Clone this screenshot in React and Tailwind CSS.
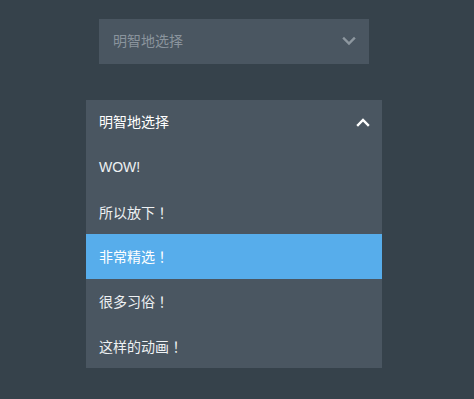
import React from "react";

const font = { fontFamily: '"Liberation Sans", "Noto Sans CJK SC", sans-serif' };
const jp = { fontFamily: '"Noto Sans CJK JP", "Noto Sans CJK TC", sans-serif' };

function Chevron({ up, className }) {
  return (
    <svg viewBox="0 0 16 16" className={className} fill="none" stroke="currentColor" strokeWidth="2.4" strokeLinecap="square" strokeLinejoin="miter">
      {up ? <path d="M3 11 L8 6 L13 11" /> : <path d="M3 5.5 L8 10.5 L13 5.5" />}
    </svg>
  );
}

function Label({ text }) {
  if (text.endsWith("！")) {
    return (
      <span>
        {text.slice(0, -1)}
        <span style={jp}>！</span>
      </span>
    );
  }
  return <span>{text}</span>;
}

export default function App() {
  const items = ["WOW!", "所以放下！", "非常精选！", "很多习俗！", "这样的动画！"];
  return (
    <div className="w-[474px] h-[399px] bg-[#36424b] flex flex-col items-start pl-[86px] pt-[19px] overflow-hidden" style={font}>
      <div className="w-[270px] h-[44.5px] bg-[#4a5661] flex items-center justify-between ml-[13px] pl-[14px] pr-[12px] text-[14px] text-[#8a949d]">
        <span>明智地选择</span>
        <Chevron className="w-[16px] h-[16px] text-[#8d979f]" />
      </div>
      <div className="w-[296px] mt-[36.5px] bg-[#4a5661] text-[14px] text-white flex flex-col">
        <div className="h-[44.67px] flex items-center justify-between pl-[13px] pr-[11px]">
          <span className="pt-[1px]">明智地选择</span>
          <Chevron up className="w-[16px] h-[16px] text-white" />
        </div>
        {items.map((t, i) => (
          <div
            key={t}
            className={
              i === 2
                ? "h-[44.67px] flex items-center pl-[13px] pt-[2px] bg-[#57adeb] text-white"
                : "h-[44.67px] flex items-center pl-[13px] pt-[2px] text-[#eef1f3]"
            }
          >
            <Label text={t} />
          </div>
        ))}
      </div>
    </div>
  );
}
